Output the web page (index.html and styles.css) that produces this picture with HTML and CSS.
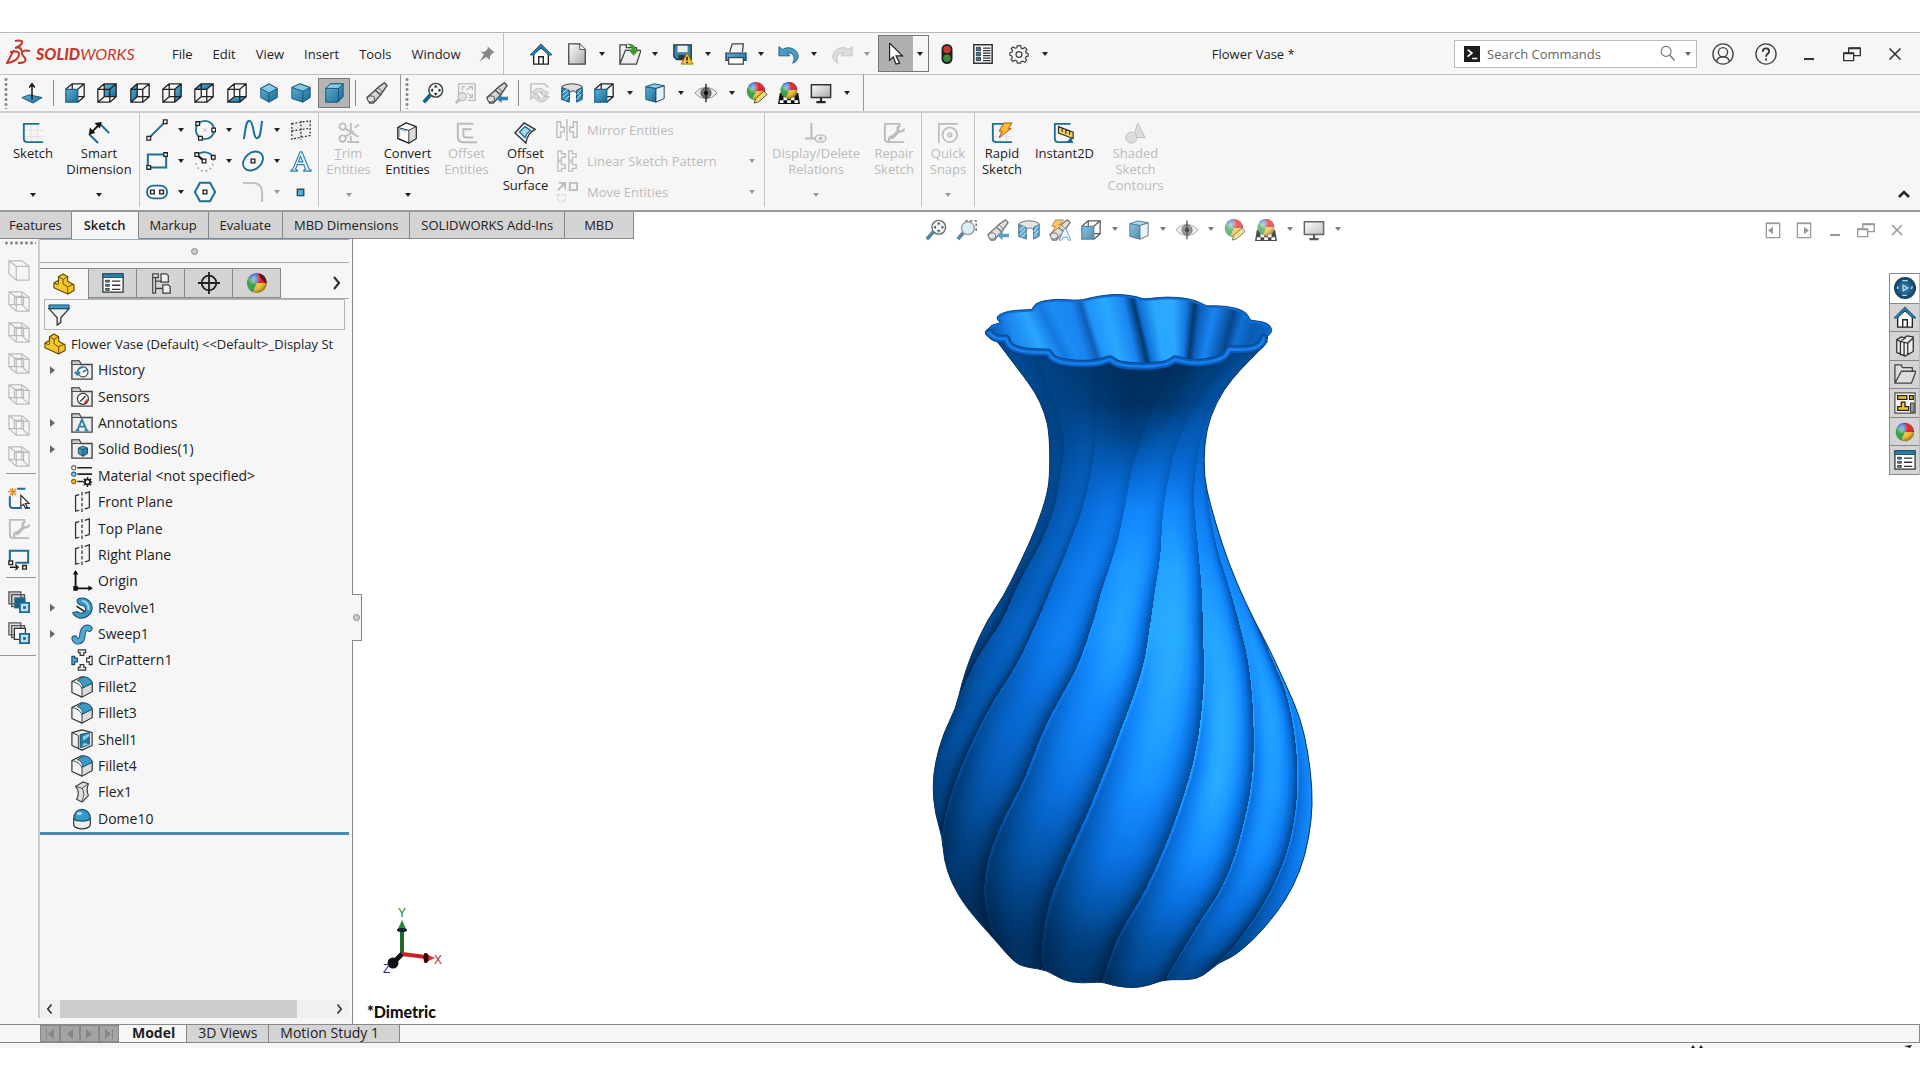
FILE: index.html
```html
<!DOCTYPE html>
<html lang="en">
<head>
    <meta charset="UTF-8">
    <meta name="viewport" content="width=device-width, initial-scale=1.0">
    <title>Flower Vase *</title>
    <link rel="stylesheet" href="styles.css">
</head>
<body>
    <!-- icon sprite -->
    <svg class="sprite" aria-hidden="true">
        <defs>
            <linearGradient id="blue" x1="0" y1="0" x2="1" y2="1"><stop offset="0" stop-color="#5db4d8"/><stop offset="1" stop-color="#1b6a93"/></linearGradient>
            <linearGradient id="grey" x1="0" y1="0" x2="1" y2="1"><stop offset="0" stop-color="#fff"/><stop offset="1" stop-color="#aaa"/></linearGradient>
            <radialGradient id="navy"><stop offset="0" stop-color="#3f86ad"/><stop offset="1" stop-color="#0e3f63"/></radialGradient>
            <radialGradient id="gloss" cx=".35" cy=".3" r=".7"><stop offset="0" stop-color="#fff" stop-opacity=".6"/><stop offset=".5" stop-color="#fff" stop-opacity="0"/><stop offset="1" stop-opacity=".35"/></radialGradient>
        </defs>
        <symbol id="wire" viewBox="0 0 24 24"><path fill="none" stroke="#222" stroke-width="1.4" d="M2 8h13v14H2zM9 2h13v14H9zM2 8l7-6M15 8l7-6M2 22l7-6M15 22l7-6"/></symbol>
        <symbol id="v-front" viewBox="0 0 24 24"><path fill="none" stroke="#222" stroke-width="1.4" d="M9 8V2h13v14h-7M2 8l7-6M15 8l7-6M15 22l7-6"/><path fill="url(#blue)" stroke="#1b5f85" stroke-width="1.4" d="M2 8h13v14H2z"/></symbol>
        <symbol id="v-back" viewBox="0 0 24 24"><path fill="url(#blue)" d="M9 2h13v14H9z"/><use href="#wire"/></symbol>
        <symbol id="v-left" viewBox="0 0 24 24"><path fill="url(#blue)" d="M2 8l7-6v14l-7 6z"/><use href="#wire"/></symbol>
        <symbol id="v-right" viewBox="0 0 24 24"><path fill="url(#blue)" d="M15 8l7-6v14l-7 6z"/><use href="#wire"/></symbol>
        <symbol id="v-top" viewBox="0 0 24 24"><path fill="url(#blue)" d="M2 8l7-6h13l-7 6z"/><use href="#wire"/></symbol>
        <symbol id="v-bottom" viewBox="0 0 24 24"><path fill="url(#blue)" d="M2 22l7-6h13l-7 6z"/><use href="#wire"/></symbol>
        <symbol id="v-iso" viewBox="0 0 24 24"><path fill="url(#blue)" stroke="#174f70" d="M12 2l9 5v10l-9 5-9-5V7z"/><path fill="#86cbe6" stroke="#174f70" d="M12 2l9 5-9 5-9-5z"/><path stroke="#174f70" d="M12 12v10"/></symbol>
        <symbol id="v-tri" viewBox="0 0 24 24"><path fill="url(#blue)" stroke="#174f70" d="M11 2l11 4v11l-8 5-12-4V6z"/><path fill="#86cbe6" stroke="#174f70" d="M11 2l11 4-8 4L2 6z"/><path stroke="#174f70" d="M14 10v12"/></symbol>
        <symbol id="v-dim" viewBox="0 0 24 24"><path fill="url(#blue)" stroke="#174f70" d="M8 2h14v14l-6 6H3V7z"/><path fill="#86cbe6" stroke="#174f70" d="M8 2h14l-5 5H3z"/><path stroke="#174f70" d="M17 7v15"/></symbol>
        <symbol id="normal" viewBox="0 0 24 24"><path fill="url(#blue)" stroke="#174f70" d="M1 17l8-3 14 3-10 6z"/><path fill="none" stroke="#111" stroke-width="1.6" d="M12 19V2M9 6l3-4 3 4"/></symbol>
        <symbol id="torch" viewBox="0 0 24 24"><path fill="url(#grey)" stroke="#444" stroke-width="1.4" d="M1 17l9-8 6 5-8 9H4zM10 9l3-3 7-5 3 3-5 7-2 3z"/><ellipse cx="5.500" cy="18.500" rx="4" ry="3.500" fill="#ddd" stroke="#444"/><path stroke="#444" d="M13 6l5 5"/></symbol>
        <symbol id="zoomfit" viewBox="0 0 24 24"><path stroke="#1b5f85" stroke-width="4" d="M2 22l8-9"/><circle cx="15" cy="9" r="7.500" fill="#f4f9fc" stroke="#444" stroke-width="1.6"/><path fill="#222" d="M15 3l2 3h-4zM15 15l2-3h-4zM9 9l3-2v4zM21 9l-3-2v4z"/></symbol>
        <symbol id="zoomarea" viewBox="0 0 24 24"><path fill="none" stroke="#333" stroke-width="1.500" stroke-dasharray="3 2" d="M10 2h12v12"/><path stroke="#1b5f85" stroke-width="4" d="M2 22l6-7"/><circle cx="13" cy="10" r="7" fill="#cfe8f3" stroke="#777" stroke-width="1.5"/></symbol>
        <symbol id="zoomoff" viewBox="0 0 24 24"><path fill="none" stroke="currentColor" stroke-width="1.5" d="M5 13V2h18v18h-8M9 9V5h3M16 5h4v4M20 13v4h-4M13 9l6-4M19 16l-4-4"/><circle cx="9" cy="16" r="4.500" fill="#e4e4e4" stroke="currentColor" stroke-width="1.500"/><path stroke="currentColor" stroke-width="3" d="M2 23l4-4"/></symbol>
        <symbol id="prev" viewBox="0 0 24 24"><use href="#torch"/><path fill="#2c7fa8" d="M11 18l6-5v3h7v4h-7v3z"/></symbol>
        <symbol id="rotateoff" viewBox="0 0 24 24"><path fill="none" stroke="currentColor" stroke-width="1.500" d="M2 20V2h15l4 4"/><path fill="#ddd" stroke="currentColor" d="M3 11c5-6 12-5 15 0h3l-3 6-6-5h3c-3-3-6-1-8 2zM22 16c-5 8-13 7-16 1H3l4-6 5 6H9c3 3 6 2 8-2z"/></symbol>
        <symbol id="section" viewBox="0 0 24 24"><path fill="#ddd" stroke="#333" d="M1 5c5-4 17-4 22 0v13l-6 3v-9c-2-3-6-3-8 0v9l-8-2z"/><path fill="#2f8db8" stroke="#174f70" d="M1 6l8 3v13l-8-3zM17 9l6-3v13l-6 3z"/><path stroke="#def" d="M2 12l5-4M2 17l6-6M4 20l5-5M17 14l5-6M17 19l5-6"/></symbol>
        <symbol id="style" viewBox="0 0 24 24"><path fill="url(#blue)" stroke="#174f70" d="M2 5l11 2v15L2 19z"/><path fill="#dff0f7" stroke="#333" d="M13 7l9-3v14l-9 4z"/><path fill="#8ccbe5" stroke="#174f70" d="M2 5l9-3 11 2-9 3z"/></symbol>
        <symbol id="eye" viewBox="0 0 24 24"><path fill="#e8e8e8" stroke="#888" d="M0 12c6-8 18-8 24 0-6 8-18 8-24 0z"/><circle cx="12" cy="12" r="5.500" fill="#777" stroke="#444"/><path stroke="#222" stroke-width="1.500" d="M12 2v20"/><circle cx="12" cy="12" r="2.500" fill="#111"/></symbol>
        <symbol id="ball" viewBox="0 0 24 24"><path fill="#2c5fc9" d="M12 12L3.500 6.500A10 10 0 0 1 12 2z"/><path fill="#d5262b" d="M12 12V2a10 10 0 0 1 10 10z"/><path fill="#35a047" d="M12 12L8 21.200A10 10 0 0 1 3.500 6.500z"/><path fill="#f2c02d" d="M12 12h10A10 10 0 0 1 8 21.200z"/><circle cx="12" cy="12" r="10" fill="url(#gloss)"/></symbol>
        <symbol id="ballpen" viewBox="0 0 24 24"><use href="#ball" x="-1" y="-2" width="24" height="24"/><path fill="#f2dc6a" stroke="#444" d="M9 23l1.500-5 9-8 3.500 3.500-9 8z"/></symbol>
        <symbol id="scene" viewBox="0 0 24 24"><path fill="#111" d="M2 12h20l2 12H0z"/><path fill="#fff" d="M2 20h4v3H2zM10 20h4v3h-4zM18 20h4v3h-4zM6 16h4v4H6zM14 16h4v4h-4z"/><use href="#ball" x="1" y="-2" width="22" height="22"/></symbol>
        <symbol id="monitor" viewBox="0 0 24 24"><path fill="url(#grey)" stroke="#333" stroke-width="1.600" d="M1.500 3h21v14h-21z"/><path stroke="#222" stroke-width="2.400" d="M12 17v5M7 22h10"/></symbol>
        <symbol id="annot" viewBox="0 0 24 24"><use href="#torch"/><path fill="#f8b934" stroke="#a45a10" d="M7 1h9l-5 5h4L3 15l4-7H3z"/><path fill="#e8f4fa" stroke="#2c7fa8" d="M11 23l6-13h1l6 13h-3l-1-3h-5l-1 3z"/></symbol>
        <symbol id="home" viewBox="0 0 24 24"><path fill="#fff" stroke="#222" stroke-width="1.500" d="M4 11v12h16V11l-8-6z"/><path fill="none" stroke="#222" stroke-width="1.500" d="M9.500 23v-8h5v8"/><path fill="#2c7fa8" stroke="#174f70" d="M0 13L12 1l12 12h-4l-8-8-8 8z"/></symbol>
        <symbol id="new" viewBox="0 0 24 24"><path fill="url(#grey)" stroke="#444" stroke-width="1.400" d="M3 1h12l6 6v16H3z"/><path fill="#fff" stroke="#444" d="M15 1v6h6"/></symbol>
        <symbol id="open" viewBox="0 0 24 24"><path fill="#eee" stroke="#444" stroke-width="1.400" d="M1 23V2h7v3h11v4M1 23L7 8h17l-5 15z"/><path fill="#3f9b2c" d="M8 1c7-1 10 2 10 6h4l-6 7-6-7h4c0-2-2-5-6-6z"/></symbol>
        <symbol id="save" viewBox="0 0 24 24"><path fill="#3a86ab" stroke="#234" stroke-width="1.400" d="M2 2h19v16H5l-3-3z"/><path fill="#eee" d="M6 3h11v7H6z"/><path fill="#333" d="M7 13h7v5H7z"/><path fill="#f9c22e" stroke="#9a6a00" d="M16.500 11L23 23H10z"/><path stroke="#222" stroke-width="1.800" d="M16.500 15v4M16.500 20.500v1.500"/></symbol>
        <symbol id="print" viewBox="0 0 24 24"><path fill="#f4f4f4" stroke="#444" stroke-width="1.400" d="M5 10L8 1h12l-1 9"/><path fill="url(#blue)" stroke="#174f70" stroke-width="1.400" d="M1 11h22v8H1z"/><path fill="#fff" stroke="#444" stroke-width="1.400" d="M4 16h16v7H4z"/></symbol>
        <symbol id="undo" viewBox="0 0 24 24"><path fill="#4a9cc2" stroke="#1b5f85" d="M1 4l4 3c8-5 18 1 17 9-1 3-3 5-6 6 3-5 2-12-6-11l3 3H1z"/></symbol>
        <symbol id="redo" viewBox="0 0 24 24"><path fill="#ddd" stroke="#c0c0c0" d="M23 4l-4 3C11 2 1 8 2 16c1 3 3 5 6 6-3-5-2-12 6-11l-3 3h12z"/></symbol>
        <symbol id="pointer" viewBox="0 0 24 24"><path fill="#fff" stroke="#222" stroke-width="1.300" d="M5 0v19l4-4 3 8 4-1-4-8h7z"/></symbol>
        <symbol id="lights" viewBox="0 0 24 24"><rect x="6" y="1" width="12" height="22" rx="6" fill="#222"/><circle cx="12" cy="7" r="4" fill="#d0382c"/><circle cx="12" cy="16.500" r="4" fill="#3f8b3c"/></symbol>
        <symbol id="options" viewBox="0 0 24 24"><path fill="#fff" stroke="#333" stroke-width="1.800" d="M1 1h22v22H1z"/><path fill="#2c7fa8" stroke="#333" d="M4 4h5v4H4zM4 10h5v4H4zM4 16h5v4H4z"/><path stroke="#333" stroke-width="1.500" d="M12 5h9M12 8h9M12 11h9M12 14h9M12 17h9M12 20h9"/></symbol>
        <symbol id="gear" viewBox="0 0 24 24"><path fill="none" stroke="#444" stroke-width="1.500" stroke-linejoin="round" d="M10 2h4l.6 3 2 .8L19 4l2.500 2.500-1.600 2.700.8 1.800 2.300.5v3l-2.500.7-.8 2 1.500 2.500-2.400 2.300-2.600-1.500-2 .8L14 23h-4l-.7-2.700-2-.8-2.500 1.500-2.300-2.300L4 16.200l-.8-2L1 13.500v-3l2.500-.6.8-2L2.600 5.500 5 3.500l2.500 1.600 2-.8z"/><circle cx="12" cy="12.500" r="3.500" fill="none" stroke="#444" stroke-width="1.500"/></symbol>
        <symbol id="pin" viewBox="0 0 24 24"><path fill="#888" d="M13 2l9 8-3 1-3 4v5l-5-4-9 6 6-9-4-4h5l4-4z"/></symbol>
        <symbol id="minus" viewBox="0 0 24 24"><path stroke="currentColor" stroke-width="2.500" d="M6 18h12"/></symbol>
        <symbol id="restore" viewBox="0 0 24 24"><path fill="none" stroke="currentColor" stroke-width="1.600" d="M2 11h12v9H2zM8 11V5h14v9h-8"/><path stroke="currentColor" stroke-width="2.500" d="M8 5h14M2 11h12"/></symbol>
        <symbol id="close" viewBox="0 0 24 24"><path stroke="currentColor" stroke-width="1.800" d="M6 6l12 12M18 6L6 18"/></symbol>
        <symbol id="user" viewBox="0 0 24 24"><g fill="none" stroke="#444" stroke-width="1.500"><circle cx="12" cy="12" r="11"/><circle cx="12" cy="10" r="5"/><path d="M5 20c1-4 4-5 7-5s6 1 7 5"/></g></symbol>
        <symbol id="help" viewBox="0 0 24 24"><circle cx="12" cy="12" r="11" fill="none" stroke="#444" stroke-width="1.500"/><path fill="none" stroke="#333" stroke-width="2" d="M8.500 9.500c0-5 7-4.500 7-.5 0 3-3.500 2.500-3.500 6M12 17v2"/></symbol>
        <symbol id="prompt" viewBox="0 0 18 18"><path fill="#1d1d1d" d="M0 0h18v18H0z"/><path fill="none" stroke="#fff" stroke-width="1.800" d="M4 4l5 4-5 4M9 14h6"/></symbol>
        <symbol id="search" viewBox="0 0 24 24"><circle cx="10" cy="9" r="7" fill="none" stroke="#777" stroke-width="1.600"/><path stroke="#777" stroke-width="2" d="M15 14l7 8"/></symbol>
        <symbol id="paneleft" viewBox="0 0 24 24"><path fill="none" stroke="currentColor" stroke-width="1.500" d="M4 4h16v17H4z"/><path fill="currentColor" d="M12 8v9l-6-4.500z"/><path stroke="currentColor" stroke-width="2" d="M4 4h16"/></symbol>
        <symbol id="paneright" viewBox="0 0 24 24"><path fill="none" stroke="currentColor" stroke-width="1.500" d="M4 4h16v17H4z"/><path fill="currentColor" d="M12 8v9l6-4.500z"/><path stroke="currentColor" stroke-width="2" d="M4 4h16"/></symbol>
        <symbol id="chev-up" viewBox="0 0 16 16"><path fill="none" stroke="#222" stroke-width="2.500" d="M3 11l5-5 5 5"/></symbol>
        <symbol id="chev-right" viewBox="0 0 16 16"><path fill="none" stroke="#333" stroke-width="2.200" d="M6 2l5 6-5 6"/></symbol>
        <symbol id="chev-left" viewBox="0 0 16 16"><path fill="none" stroke="#333" stroke-width="2.200" d="M10 2L5 8l5 6"/></symbol>

        <!-- sketch tools -->
        <symbol id="sketch" viewBox="0 0 24 24"><path stroke="#ddd" d="M3 9h20M3 16h20M10 3v18M17 3v18"/><path fill="none" stroke="#1f6f94" stroke-width="2" d="M19 2H2v16q0 4 4 4h17"/></symbol>
        <symbol id="sketchoff" viewBox="0 0 24 24"><path fill="none" stroke="currentColor" stroke-width="2" d="M19 2H2v16q0 4 4 4h17"/></symbol>
        <symbol id="dim" viewBox="0 0 24 24"><path fill="none" stroke="#1f6f94" stroke-width="2.200" d="M1 13l10 10M13 2l10 10"/><path stroke="#111" stroke-width="2" d="M4 11l8-8"/><path fill="#111" d="M1 14l1-8 6 6zM15 0L7 1l6 6z"/></symbol>
        <symbol id="line" viewBox="0 0 24 24"><path stroke="#1f6f94" stroke-width="2" d="M3 21L21 3"/><path fill="#fff" stroke="#222" stroke-width="1.400" d="M1 19h4v4H1zM19 1h4v4h-4z"/></symbol>
        <symbol id="circle" viewBox="0 0 24 24"><circle cx="12" cy="12" r="10" fill="none" stroke="#1f6f94" stroke-width="2"/><path stroke="#bbb" d="M10 10l4 4M14 10l-4 4"/><path fill="#fff" stroke="#222" stroke-width="1.400" d="M2 3h4v4H2zM19.500 10h4v4h-4zM5 19h4v4H5z"/></symbol>
        <symbol id="spline" viewBox="0 0 24 24"><path fill="none" stroke="#1f6f94" stroke-width="2.200" d="M2 22C4 12 4 2 8 2c5 0 4 19 8 19 5 0 4-9 6-19"/></symbol>
        <symbol id="splane" viewBox="0 0 24 24"><path fill="#eee" stroke="#222" stroke-width="1.300" stroke-dasharray="2 2" d="M2 5l20-3v16L2 22zM12 2v21M2 13l20-3"/></symbol>
        <symbol id="rect" viewBox="0 0 24 24"><path fill="none" stroke="#1f6f94" stroke-width="2.200" d="M2 5h20v14H2z"/><path fill="#fff" stroke="#222" stroke-width="1.400" d="M1 17h4v4H1zM19.500 3h4v4h-4z"/></symbol>
        <symbol id="arc" viewBox="0 0 24 24"><path fill="none" stroke="#1f6f94" stroke-width="2" d="M3 6c6-6 15-4 18 2"/><path fill="none" stroke="#999" stroke-dasharray="2 3" stroke-width="1.500" d="M21 10c1 8-4 13-10 13S2 17 2 12"/><path stroke="#111" stroke-width="2.500" d="M4 6l7 6"/><path fill="#fff" stroke="#222" stroke-width="1.400" d="M1 3h4v4H1zM19 6h4v4h-4zM9 10h4v4H9z"/></symbol>
        <symbol id="ellipse" viewBox="0 0 24 24"><ellipse cx="12" cy="12" rx="12" ry="9" fill="none" stroke="#1f6f94" stroke-width="2" transform="rotate(-40 12 12)"/><path fill="none" stroke="#222" stroke-width="1.500" d="M10 10h4v4h-4z"/></symbol>
        <symbol id="text" viewBox="0 0 24 24"><path fill="#eaf4f9" stroke="#2c7fa8" stroke-width="1.200" d="M1 22l2-1L11 2h2l8 19 2 1v1h-8v-1l2-1-2-5H8l-2 5 2 1v1H1zM9 13h5l-2.500-6z"/></symbol>
        <symbol id="slot" viewBox="0 0 24 24"><rect x="1" y="5" width="22" height="14" rx="7" fill="none" stroke="#1f6f94" stroke-width="2"/><path fill="#fff" stroke="#222" stroke-width="1.500" d="M5 10h4v4H5zM15 10h4v4h-4z"/></symbol>
        <symbol id="poly" viewBox="0 0 24 24"><path fill="none" stroke="#1f6f94" stroke-width="2.200" d="M6.500 2h11L23 12l-5.500 10h-11L1 12z"/><path fill="#fff" stroke="#222" stroke-width="1.500" d="M10 10h4v4h-4z"/></symbol>
        <symbol id="sfillet" viewBox="0 0 24 24"><path fill="none" stroke="#bbb" stroke-width="2" d="M1 2h10q11 0 11 11v10"/></symbol>
        <symbol id="point" viewBox="0 0 24 24"><path fill="#4fb0dc" stroke="#17506f" stroke-width="1.500" d="M8 9h7v7H8z"/></symbol>
        <symbol id="trim" viewBox="0 0 24 24"><g fill="none" stroke="currentColor" stroke-width="2"><circle cx="5" cy="5" r="3.500"/><circle cx="5" cy="18" r="3.500"/><path d="M8 7l14 9M8 16l9-6M14 1v10M18 6l5-3M14 15v8M10 22h13"/></g></symbol>
        <symbol id="convert" viewBox="0 0 24 24"><path fill="#fff" stroke="#222" stroke-width="1.500" stroke-linejoin="round" d="M11 1l11 4v13l-8 5-12-5V6z"/><path fill="#ddd" stroke="#222" d="M14 9v14l8-5V5z"/><path fill="none" stroke="#222" d="M2 6l12 3"/><path fill="none" stroke="#49a5cc" d="M4 16V8l8 2"/></symbol>
        <symbol id="offset" viewBox="0 0 24 24"><path fill="none" stroke="currentColor" stroke-width="2.200" d="M19 2H2v14q0 6 6 6h15M17 8H8v6q0 3 3 3h8"/></symbol>
        <symbol id="surface" viewBox="0 0 24 24"><path fill="#e8f2f7" stroke="#333" stroke-width="1.500" d="M1 12L11 1l12 7c-6 3-9 7-10 15z"/><path fill="#a9d5e8" stroke="#1f6f94" stroke-width="1.500" d="M6 11l6-6 6 4c-3 2-5 5-6 8z"/></symbol>
        <symbol id="mirror" viewBox="0 0 24 24"><path fill="none" stroke="currentColor" stroke-width="1.500" d="M12 0v24M1 3h4v6h4v5H5v6H1zM23 3h-4v6h-4v5h4v6h4z"/></symbol>
        <symbol id="pattern" viewBox="0 0 24 24"><path fill="none" stroke="currentColor" stroke-width="1.400" d="M2 1h4v3h4v4H6v3H2zM14 1h4v3h4v4h-4v3h-4zM2 13h4v3h4v4H6v3H2zM14 13h4v3h4v4h-4v3h-4z"/></symbol>
        <symbol id="move" viewBox="0 0 24 24"><path fill="none" stroke="currentColor" stroke-width="2" d="M15 2h8v8h-8zM2 10l7-7M3 2h7v7"/><path fill="none" stroke="currentColor" stroke-dasharray="2 2" d="M2 15h8v7H2z"/></symbol>
        <symbol id="relations" viewBox="0 0 24 24"><path stroke="currentColor" stroke-width="2.200" d="M7 1v17M0 18h14"/><ellipse cx="17" cy="18" rx="6" ry="4" fill="#eee" stroke="currentColor" stroke-width="1.500"/><circle cx="17" cy="18" r="2" fill="currentColor"/></symbol>
        <symbol id="repair" viewBox="0 0 24 24"><use href="#sketchoff"/><path fill="none" stroke="currentColor" stroke-width="3.500" d="M9 18l9-9"/><path fill="none" stroke="currentColor" stroke-width="2.500" d="M19 4c-4 1-4 5-1 6 3 1 5-1 5-3M11 16c-4-1-5 2-4 5"/></symbol>
        <symbol id="snaps" viewBox="0 0 24 24"><g fill="none" stroke="currentColor" stroke-width="1.800"><path d="M2 23V2h21"/><circle cx="14" cy="14" r="8"/><circle cx="14" cy="14" r="2"/></g></symbol>
        <symbol id="rapid" viewBox="0 0 24 24"><use href="#sketch"/><path fill="#f9bb3a" stroke="#a4500c" d="M14 1h9l-4 6h3L9 17l3-7H9z"/></symbol>
        <symbol id="instant" viewBox="0 0 24 24"><path fill="none" stroke="#1f6f94" stroke-width="2" d="M19 2H2v16q0 4 4 4h15"/><path fill="#f4d35a" stroke="#333" stroke-width="1.300" d="M6 5l16 6v7L6 12zM10 7v4M14 8v5M18 10v4"/><path fill="#1f6f94" d="M22 23h-8l6-7z"/></symbol>
        <symbol id="contours" viewBox="0 0 24 24"><path fill="#ddd" stroke="currentColor" d="M15 1l8 16H10z"/><circle cx="8" cy="17" r="6" fill="#ddd" stroke="currentColor"/></symbol>
        <symbol id="ghost" viewBox="0 0 24 24"><path fill="none" stroke="currentColor" stroke-width="1.300" d="M1 2h14l8 6v15H9l-8-7zM1 2l8 6h14M9 8v15"/></symbol>
        <symbol id="ghostbox" viewBox="0 0 24 24"><path fill="none" stroke="currentColor" stroke-width="1.300" d="M1 2h14l8 6v15H9l-8-7zM1 2l8 6h14M9 8v15M15 2v14M1 16h14l8 7M7 7h10v9H7z"/></symbol>
        <symbol id="newsketch" viewBox="0 0 24 24"><path fill="none" stroke="#1f6f94" stroke-width="2.200" d="M10 2h9M2 10v9q0 4 4 4h9M19 23h5"/><path stroke="#e0902a" stroke-width="1.500" d="M5 1v9M0 5h9M2 2l7 7M9 2L2 9"/><path fill="#fff" stroke="#333" stroke-width="1.300" d="M14 9v12l3-2 2 4 2-1-2-4h4z"/></symbol>
        <symbol id="modify" viewBox="0 0 24 24"><path fill="none" stroke="#1f6f94" stroke-width="2.200" d="M2 13V2h20v13H8"/><path fill="#fff" stroke="#222" stroke-width="1.500" d="M1 13h4v4H1zM16 18h4v4h-4z"/><path fill="none" stroke="#222" stroke-width="1.600" d="M2 20h9M8 17l3 3-3 3"/></symbol>
        <symbol id="stack1" viewBox="0 0 24 24"><path fill="#ccc" stroke="#555" stroke-width="1.400" d="M1 1h13v13H1zM4 4h14v13H4z"/><path fill="#1b5f85" d="M7 7h12v12H7z"/><path fill="#bfe2f0" stroke="#1b6a93" stroke-width="2" d="M13 13h10v10H13z"/><path fill="#1b6a93" d="M16.500 16.500h3v3h-3z"/></symbol>
        <symbol id="stack2" viewBox="0 0 24 24"><path fill="#ddd" stroke="#555" stroke-width="1.400" d="M1 1h13v13H1zM4 4h14v13H4z"/><path fill="#fff" stroke="#333" stroke-width="1.400" d="M7 7h12v12H7z"/><path fill="#bfe2f0" stroke="#1b6a93" stroke-width="2" d="M13 13h10v10H13z"/><path fill="#1b6a93" d="M16.500 16.500h3v3h-3z"/></symbol>

        <!-- feature tree -->
        <symbol id="part" viewBox="0 0 24 24"><path fill="#f5c72c" stroke="#5c4708" stroke-width="1.200" stroke-linejoin="round" d="M1 11l5-3V4l5-3 5 3v5l7 4v6l-7 4L1 16z"/><path fill="none" stroke="#5c4708" d="M6 4l5 3v5l5 3v8M11 7l5-3M6 8v4M16 15l7-3M1 11l5 2"/></symbol>
        <symbol id="props" viewBox="0 0 24 24"><path fill="#fff" stroke="#333" stroke-width="1.400" d="M1 2h22v20H1z"/><path fill="#2c7fa8" stroke="#174f70" d="M1 2h22v4H1z"/><path fill="#4fa9cf" stroke="#333" d="M4 9h4v2H4zM4 13.500h4v2H4zM4 18h4v2H4z"/><path stroke="#333" stroke-width="1.500" d="M11 10h9M11 14.500h9M11 19h9"/></symbol>
        <symbol id="config" viewBox="0 0 24 24"><path fill="#eee" stroke="#444" stroke-width="1.400" d="M3 2h6v4H3zM3 6v17h3V6M6 18h8M6 10h7M14 14h6l2 2v7h-8zM12 2h6l2 2v7h-8z"/></symbol>
        <symbol id="target" viewBox="0 0 24 24"><g fill="none" stroke="#222" stroke-width="2"><circle cx="12" cy="12" r="8"/><path d="M12 0v24M0 12h24"/></g></symbol>
        <symbol id="ball-tab" viewBox="0 0 24 24"><use href="#ball" x="-1" y="-1" width="26" height="26"/><path fill="#5a1820" d="M14 2c6 0 9 6 8 11-3-3-7-6-8-11z"/></symbol>
        <symbol id="funnel" viewBox="0 0 24 24"><path fill="#eee" stroke="#333" stroke-width="1.400" d="M1 5l9 10v8l4-3v-5l9-10z"/><path fill="#3a9ac4" stroke="#174f70" d="M1 1h22v4H1z"/></symbol>
        <symbol id="folder" viewBox="0 0 24 24"><path fill="#eee" stroke="#444" stroke-width="1.500" d="M1 22V2h8l2 4h12v16z"/><path fill="#ccc" stroke="#444" d="M1 2h8l2 4H1z"/></symbol>
        <symbol id="history" viewBox="0 0 24 24"><use href="#folder"/><circle cx="13" cy="14" r="5.500" fill="#fff" stroke="#555" stroke-width="1.300"/><path fill="none" stroke="#2c7fa8" stroke-width="2" d="M4 14l3 3 3-3M7 15c0-4 3-6 6-6M13 14l4-2"/></symbol>
        <symbol id="sensor" viewBox="0 0 24 24"><use href="#folder"/><circle cx="13" cy="14" r="6" fill="#fff" stroke="#333" stroke-width="1.300"/><path fill="none" stroke="#d03030" stroke-width="2" d="M14.500 18.500a5 5 0 0 0 3-4"/><path stroke="#333" stroke-width="1.500" d="M10 17l6-6"/></symbol>
        <symbol id="annotations" viewBox="0 0 24 24"><use href="#folder"/><path fill="none" stroke="#2c7fa8" stroke-width="2" d="M7 20l5-12 5 12M9 16h6M5 20h4M15 20h4"/></symbol>
        <symbol id="bodies" viewBox="0 0 24 24"><use href="#folder"/><path fill="url(#blue)" stroke="#174f70" d="M13 9l5 2v6l-5 3-5-3v-6z"/><path fill="none" stroke="#174f70" d="M8 11l5 2 5-2M13 13v7"/></symbol>
        <symbol id="material" viewBox="0 0 24 24"><path stroke="#222" stroke-width="1.800" d="M7 3h16M7 10h16M7 18h6"/><g fill="#fff" stroke-width="1.300"><circle cx="3" cy="3" r="2.300" stroke="#666"/><circle cx="3" cy="10" r="2.300" fill="#8fd0ee" stroke="#1b6a93"/><circle cx="3" cy="18" r="2.300" fill="#f5c72c" stroke="#8a6a00"/></g><circle cx="18" cy="18.500" r="2.800" fill="none" stroke="#222" stroke-width="2"/><path stroke="#222" stroke-width="1.600" d="M18 13v3M18 21v3M13 18.500h2M21 18.500h2M14 15l2 2M20 20l2 2M22 15l-2 2M16 20l-2 2"/></symbol>
        <symbol id="plane" viewBox="0 0 24 24"><path fill="none" stroke="#333" stroke-width="1.400" d="M9 4L5 5v17l4-1M15 2.500l5-1.500v17l-5 1.500"/><path stroke="#333" stroke-width="1.400" stroke-dasharray="4 2" d="M12 1v22"/></symbol>
        <symbol id="origin" viewBox="0 0 24 24"><path fill="none" stroke="#111" stroke-width="2" d="M5 3v17h16"/><path fill="#111" d="M5 0l3 5H2zM24 20l-5-3v6zM2.500 17.500h5v5h-5z"/></symbol>
        <symbol id="revolve" viewBox="0 0 24 24"><path fill="#3a9ac4" stroke="#174f70" stroke-width="1.200" d="M8 2c8-3 15 3 15 10S16 24 9 23c-4-1-7-4-7-6l5-1c3 3 8 2 9-2 0-4-3-5-5-5-3 0-6-5-3-7z"/><path fill="none" stroke="#a9dbef" stroke-width="2" d="M12 4c5 1 8 5 7 10"/><path stroke="#111" stroke-width="1.500" d="M6 10l9 6"/></symbol>
        <symbol id="sweep" viewBox="0 0 24 24"><path fill="none" stroke="#174f70" stroke-width="7" stroke-linecap="round" d="M4 17c2 5 7 3 8-1l1-6c1-4 4-6 7-4"/><path fill="none" stroke="#4fa9cf" stroke-width="5" stroke-linecap="round" d="M4 17c2 5 7 3 8-1l1-6c1-4 4-6 7-4"/></symbol>
        <symbol id="cirpat" viewBox="0 0 24 24"><path fill="#4fa9cf" stroke="#174f70" stroke-width="1.300" d="M1 8h3v2h3v4H4v3H1z"/><path fill="#f6f6f6" stroke="#333" stroke-width="1.300" d="M23 8h-3v2h-3v4h3v3h3zM8 1h8v3h-2v3h-4V4H8zM8 23h8v-3h-2v-3h-4v3H8z"/></symbol>
        <symbol id="fillet" viewBox="0 0 24 24"><path fill="#f4f4f4" stroke="#333" stroke-width="1.300" stroke-linejoin="round" d="M1 6l10-5c5 0 9 1 12 6v10l-11 6-11-5z"/><path fill="#dcdcdc" stroke="#333" d="M12 13v10l11-6V8z"/><path fill="none" stroke="#333" d="M1 6c5 1 9 3 11 8"/><path fill="#3a9ac4" stroke="#174f70" d="M7 5l6-4c5 0 9 2 10 7l-10 5c0-4-3-7-6-8z"/></symbol>
        <symbol id="shell" viewBox="0 0 24 24"><path fill="#eee" stroke="#333" stroke-width="1.300" stroke-linejoin="round" d="M1 4l11-3 11 3v14l-11 5-11-5z"/><path fill="none" stroke="#333" d="M1 4l7 3v14"/><path fill="#1f7ba5" stroke="#174f70" d="M10 6l10-2v13l-8 3h-2z"/><path fill="#8ccbe5" d="M13 8l7-3v3l-7 5zM12 19l2-4 6 2z"/></symbol>
        <symbol id="flex" viewBox="0 0 24 24"><path fill="#ddd" stroke="#444" stroke-width="1.300" stroke-linejoin="round" d="M5 6l8-5 6 2c-2 5-2 8 0 13l-7 7-6-3c3-5 3-9-1-14z"/><path fill="none" stroke="#444" d="M5 6l7 2 7-5M12 8c3 5 2 9 0 14"/></symbol>
        <symbol id="dome" viewBox="0 0 24 24"><path fill="#eee" stroke="#333" stroke-width="1.300" d="M3 11v8c3 5 15 5 18 0v-8z"/><path fill="#3a9ac4" stroke="#174f70" stroke-width="1.300" d="M3 12c0-14 18-14 18 0-4 3-14 3-18 0z"/><ellipse cx="9" cy="6" rx="3" ry="2" fill="#a9dbef"/></symbol>

        <!-- task pane -->
        <symbol id="globe" viewBox="0 0 24 24"><circle cx="12" cy="12" r="12" fill="url(#navy)"/><path fill="none" stroke="#a9dbef" stroke-width="1.500" d="M10 9l5 3-5 3zM4 10v3M20 10l-1 3M9 20h5M9 4h6"/></symbol>
        <symbol id="books" viewBox="0 0 24 24"><path fill="#eee" stroke="#333" stroke-width="1.400" stroke-linejoin="round" d="M3 5l5-3 3 1 3-2 7 1v16l-9 5-9-4zM3 5l4 2v15M8 6l5-3M7 7l4 1v14M11 8l4 1 6-6M15 9v12"/></symbol>
        <symbol id="dir" viewBox="0 0 24 24"><path fill="#ddd" stroke="#444" stroke-width="1.400" stroke-linejoin="round" d="M1 22V2h7l1 3h11v4M1 22L8 9h16l-5 13z"/></symbol>
        <symbol id="palette" viewBox="0 0 24 24"><path fill="#f4f4f4" stroke="#555" stroke-width="1.400" d="M1 1h22v22H1z"/><path fill="#f5c72c" stroke="#222" stroke-width="1.400" d="M4 4h10v4H4zM17 4h4v4h-4zM8 11h4v5h4v4H4v-4h4z"/><path fill="#999" stroke="#333" d="M18 12h4v10h-4z"/></symbol>
    </svg>

    <div class="app">
        <header class="titlebar">
            <div class="logo">
                <svg class="logo-mark" viewBox="0 0 24 26" aria-hidden="true"><g fill="none" stroke="#c8372d" stroke-width="2"><path d="M9 2c6-1 8 0 7 2s-4 4-7 5c4-1 7 0 6 3"/><path d="M8 11L1 24c8-1 12-5 12-9 0-3-4-3-9-2"/><path d="M24 12c-6-1-9 0-8 3 1 3 5 4 3 7-1 2-5 2-7 2"/></g></svg>
                <span class="logo-bold">SOLID</span><span class="logo-thin">WORKS</span>
            </div>
            <nav class="menu">
                <button>File</button>
                <button>Edit</button>
                <button>View</button>
                <button>Insert</button>
                <button>Tools</button>
                <button>Window</button>
            </nav>
            <button class="pin" aria-label="Pin menu"><svg><use href="#pin"/></svg></button>
            <div class="quick">
                <button class="tool home" aria-label="Home"><svg><use href="#home"/></svg></button>
                <div class="split"><button class="tool" aria-label="New"><svg><use href="#new"/></svg></button><button class="drop" aria-label="New options"></button></div>
                <div class="split"><button class="tool" aria-label="Open"><svg><use href="#open"/></svg></button><button class="drop" aria-label="Open options"></button></div>
                <div class="split"><button class="tool" aria-label="Save"><svg><use href="#save"/></svg></button><button class="drop" aria-label="Save options"></button></div>
                <div class="split"><button class="tool" aria-label="Print"><svg><use href="#print"/></svg></button><button class="drop" aria-label="Print options"></button></div>
                <div class="split"><button class="tool" aria-label="Undo"><svg><use href="#undo"/></svg></button><button class="drop" aria-label="Undo options"></button></div>
                <div class="split off"><button class="tool" aria-label="Redo" disabled><svg><use href="#redo"/></svg></button><button class="drop" aria-label="Redo options" disabled></button></div>
                <div class="select-tool"><button class="tool" aria-label="Select"><svg><use href="#pointer"/></svg></button><button class="drop" aria-label="Select options"></button></div>
                <button class="tool wide" aria-label="Rebuild"><svg><use href="#lights"/></svg></button>
                <button class="tool wide small" aria-label="File properties"><svg><use href="#options"/></svg></button>
                <button class="tool wide small" aria-label="Options"><svg><use href="#gear"/></svg></button>
                <button class="drop gear-drop" aria-label="Options menu"></button>
            </div>
            <h1 class="doc-title">Flower Vase *</h1>
            <div class="search">
                <svg class="search-prompt" aria-hidden="true"><use href="#prompt"/></svg>
                <input type="text" placeholder="Search Commands" aria-label="Search Commands">
                <svg class="search-lens" aria-hidden="true"><use href="#search"/></svg>
                <button class="drop" aria-label="Search scope"></button>
            </div>
            <div class="window-buttons">
                <button aria-label="Account"><svg><use href="#user"/></svg></button>
                <button aria-label="Help"><svg><use href="#help"/></svg></button>
                <button class="slim" aria-label="Minimize"><svg><use href="#minus"/></svg></button>
                <button class="slim" aria-label="Restore"><svg><use href="#restore"/></svg></button>
                <button aria-label="Close"><svg><use href="#close"/></svg></button>
            </div>
        </header>

        <div class="toolbar">
            <div class="bar">
                <span class="grip"></span>
                <button class="tool lone" aria-label="Normal to"><svg><use href="#normal"/></svg></button>
                <span class="sep"></span>
                <div class="views">
                    <button class="tool" aria-label="Front"><svg><use href="#v-front"/></svg></button>
                    <button class="tool" aria-label="Back"><svg><use href="#v-back"/></svg></button>
                    <button class="tool" aria-label="Left"><svg><use href="#v-left"/></svg></button>
                    <button class="tool" aria-label="Right"><svg><use href="#v-right"/></svg></button>
                    <button class="tool" aria-label="Top"><svg><use href="#v-top"/></svg></button>
                    <button class="tool" aria-label="Bottom"><svg><use href="#v-bottom"/></svg></button>
                    <button class="tool" aria-label="Isometric"><svg><use href="#v-iso"/></svg></button>
                    <button class="tool" aria-label="Trimetric"><svg><use href="#v-tri"/></svg></button>
                    <button class="tool pressed" aria-label="Dimetric"><svg><use href="#v-dim"/></svg></button>
                </div>
                <span class="sep"></span>
                <button class="tool" aria-label="View selector"><svg><use href="#torch"/></svg></button>
            </div>
            <div class="bar">
                <span class="grip"></span>
                <button class="tool lone" aria-label="Zoom to fit"><svg><use href="#zoomfit"/></svg></button>
                <button class="tool off" aria-label="Zoom to selection" disabled><svg><use href="#zoomoff"/></svg></button>
                <button class="tool" aria-label="Previous view"><svg><use href="#prev"/></svg></button>
                <span class="sep"></span>
                <button class="tool off" aria-label="Rotate" disabled><svg><use href="#rotateoff"/></svg></button>
                <button class="tool" aria-label="Section view"><svg><use href="#section"/></svg></button>
                <button class="tool" aria-label="View orientation"><svg><use href="#v-front"/></svg></button><button class="drop" aria-label="Orientation menu"></button>
                <button class="tool" aria-label="Display style"><svg><use href="#style"/></svg></button><button class="drop" aria-label="Style menu"></button>
                <button class="tool" aria-label="Hide/show"><svg><use href="#eye"/></svg></button><button class="drop" aria-label="Hide/show menu"></button>
                <button class="tool" aria-label="Edit appearance"><svg><use href="#ballpen"/></svg></button>
                <button class="tool" aria-label="Apply scene"><svg><use href="#scene"/></svg></button>
                <button class="tool" aria-label="View settings"><svg><use href="#monitor"/></svg></button><button class="drop" aria-label="Settings menu"></button>
            </div>
        </div>

        <section class="ribbon">
            <div class="group pad">
                <div class="command w-66"><button><svg><use href="#sketch"/></svg>Sketch</button><button class="drop" aria-label="Sketch menu"></button></div>
                <div class="command w-66"><button><svg><use href="#dim"/></svg>Smart<br>Dimension</button><button class="drop" aria-label="Dimension menu"></button></div>
            </div>
            <div class="group entities">
                <button aria-label="Line"><svg><use href="#line"/></svg></button><button class="drop" aria-label="Line menu"></button>
                <button aria-label="Circle"><svg><use href="#circle"/></svg></button><button class="drop" aria-label="Circle menu"></button>
                <button aria-label="Spline"><svg><use href="#spline"/></svg></button><button class="drop" aria-label="Spline menu"></button>
                <button aria-label="Plane"><svg><use href="#splane"/></svg></button>
                <button aria-label="Rectangle"><svg><use href="#rect"/></svg></button><button class="drop" aria-label="Rectangle menu"></button>
                <button aria-label="Arc"><svg><use href="#arc"/></svg></button><button class="drop" aria-label="Arc menu"></button>
                <button aria-label="Ellipse"><svg><use href="#ellipse"/></svg></button><button class="drop" aria-label="Ellipse menu"></button>
                <button aria-label="Text"><svg><use href="#text"/></svg></button>
                <button aria-label="Slot"><svg><use href="#slot"/></svg></button><button class="drop" aria-label="Slot menu"></button>
                <button aria-label="Polygon"><svg><use href="#poly"/></svg></button><span></span>
                <button aria-label="Sketch fillet" disabled><svg><use href="#sfillet"/></svg></button><button class="drop" aria-label="Fillet menu" disabled></button>
                <button aria-label="Point"><svg><use href="#point"/></svg></button>
            </div>
            <div class="group">
                <div class="command w-59 off"><button disabled><svg><use href="#trim"/></svg><span><u>T</u>rim</span>Entities</button><button class="drop" aria-label="Trim menu" disabled></button></div>
                <div class="command w-59"><button><svg><use href="#convert"/></svg>Convert<br>Entities</button><button class="drop" aria-label="Convert menu"></button></div>
                <div class="command w-59 off"><button disabled><svg><use href="#offset"/></svg>Offset<br>Entities</button></div>
                <div class="command w-59"><button><svg><use href="#surface"/></svg>Offset<br>On<br>Surface</button></div>
                <div class="command-list off">
                    <div><button disabled><svg><use href="#mirror"/></svg>Mirror Entities</button></div>
                    <div><button disabled><svg><use href="#pattern"/></svg>Linear Sketch Pattern</button><button class="drop" aria-label="Pattern menu" disabled></button></div>
                    <div><button disabled><svg><use href="#move"/></svg>Move Entities</button><button class="drop" aria-label="Move menu" disabled></button></div>
                </div>
            </div>
            <div class="group">
                <div class="command w-102 off"><button disabled><svg><use href="#relations"/></svg>Display/Delete<br>Relations</button><button class="drop" aria-label="Relations menu" disabled></button></div>
                <div class="command w-54 off"><button disabled><svg><use href="#repair"/></svg>Repair<br>Sketch</button></div>
            </div>
            <div class="group">
                <div class="command w-52 off"><button disabled><svg><use href="#snaps"/></svg>Quick<br>Snaps</button><button class="drop" aria-label="Snaps menu" disabled></button></div>
            </div>
            <div class="group last">
                <div class="command w-54"><button><svg><use href="#rapid"/></svg>Rapid<br>Sketch</button></div>
                <div class="command w-71"><button><svg><use href="#instant"/></svg>Instant2D</button></div>
                <div class="command w-71 off"><button disabled><svg><use href="#contours"/></svg>Shaded<br>Sketch<br>Contours</button></div>
            </div>
            <button class="collapse" aria-label="Collapse ribbon"><svg><use href="#chev-up"/></svg></button>
        </section>

        <nav class="tabs">
            <button class="tab-first">Features</button>
            <button class="active">Sketch</button>
            <button>Markup</button>
            <button>Evaluate</button>
            <button>MBD Dimensions</button>
            <button>SOLIDWORKS Add-Ins</button>
            <button class="tab-wide">MBD</button>
        </nav>

        <main class="workspace">
            <aside class="side">
                <span class="grip-h"></span>
                <div class="side-group off">
                    <button aria-label="Front plane view" disabled><svg><use href="#ghost"/></svg></button>
                    <button aria-label="Back plane view" disabled><svg><use href="#ghostbox"/></svg></button>
                    <button aria-label="Left plane view" disabled><svg><use href="#ghostbox"/></svg></button>
                    <button aria-label="Right plane view" disabled><svg><use href="#ghostbox"/></svg></button>
                    <button aria-label="Top plane view" disabled><svg><use href="#ghostbox"/></svg></button>
                    <button aria-label="Bottom plane view" disabled><svg><use href="#ghostbox"/></svg></button>
                    <button aria-label="Section plane view" disabled><svg><use href="#ghostbox"/></svg></button>
                </div>
                <div class="side-group">
                    <button aria-label="New sketch"><svg><use href="#newsketch"/></svg></button>
                    <button class="off" aria-label="Repair" disabled><svg><use href="#repair"/></svg></button>
                    <button aria-label="Modify"><svg><use href="#modify"/></svg></button>
                </div>
                <div class="side-group end">
                    <button aria-label="Make block"><svg><use href="#stack1"/></svg></button>
                    <button aria-label="Insert block"><svg><use href="#stack2"/></svg></button>
                </div>
            </aside>

            <aside class="panel">
                <div class="panel-grip"><span class="dot"></span></div>
                <div class="panel-tabs">
                    <button class="active" aria-label="Feature tree"><svg><use href="#part"/></svg></button>
                    <button aria-label="Properties"><svg><use href="#props"/></svg></button>
                    <button aria-label="Configurations"><svg><use href="#config"/></svg></button>
                    <button aria-label="Dimensions"><svg><use href="#target"/></svg></button>
                    <button aria-label="Display"><svg><use href="#ball-tab"/></svg></button>
                    <button class="more" aria-label="More tabs"><svg><use href="#chev-right"/></svg></button>
                </div>
                <label class="filter"><svg aria-hidden="true"><use href="#funnel"/></svg><input type="text" aria-label="Filter tree"></label>
                <div class="tree-root"><svg aria-hidden="true"><use href="#part"/></svg>Flower Vase (Default) &lt;&lt;Default&gt;_Display St</div>
                <ul class="tree">
                    <li class="has-children"><svg><use href="#history"/></svg>History</li>
                    <li><svg><use href="#sensor"/></svg>Sensors</li>
                    <li class="has-children"><svg><use href="#annotations"/></svg>Annotations</li>
                    <li class="has-children"><svg><use href="#bodies"/></svg>Solid Bodies(1)</li>
                    <li><svg><use href="#material"/></svg>Material &lt;not specified&gt;</li>
                    <li><svg><use href="#plane"/></svg>Front Plane</li>
                    <li><svg><use href="#plane"/></svg>Top Plane</li>
                    <li><svg><use href="#plane"/></svg>Right Plane</li>
                    <li><svg><use href="#origin"/></svg>Origin</li>
                    <li class="has-children"><svg><use href="#revolve"/></svg>Revolve1</li>
                    <li class="has-children"><svg><use href="#sweep"/></svg>Sweep1</li>
                    <li><svg><use href="#cirpat"/></svg>CirPattern1</li>
                    <li><svg><use href="#fillet"/></svg>Fillet2</li>
                    <li><svg><use href="#fillet"/></svg>Fillet3</li>
                    <li><svg><use href="#shell"/></svg>Shell1</li>
                    <li><svg><use href="#fillet"/></svg>Fillet4</li>
                    <li><svg><use href="#flex"/></svg>Flex1</li>
                    <li><svg><use href="#dome"/></svg>Dome10</li>
                </ul>
                <div class="scrollbar">
                    <button aria-label="Scroll left"><svg><use href="#chev-left"/></svg></button>
                    <span class="track"><span class="thumb"></span></span>
                    <button aria-label="Scroll right"><svg><use href="#chev-right"/></svg></button>
                </div>
            </aside>

            <section class="viewport">
                <button class="splitter" aria-label="Collapse panel"><span class="dot"></span></button>
                <div class="hud">
                    <button class="tool" aria-label="Zoom to fit"><svg><use href="#zoomfit"/></svg></button>
                    <button class="tool" aria-label="Zoom to area"><svg><use href="#zoomarea"/></svg></button>
                    <button class="tool" aria-label="Previous view"><svg><use href="#prev"/></svg></button>
                    <button class="tool" aria-label="Section view"><svg><use href="#section"/></svg></button>
                    <button class="tool" aria-label="Annotation views"><svg><use href="#annot"/></svg></button>
                    <button class="tool" aria-label="View orientation"><svg><use href="#v-front"/></svg></button><button class="drop" aria-label="Orientation menu"></button>
                    <button class="tool" aria-label="Display style"><svg><use href="#style"/></svg></button><button class="drop" aria-label="Style menu"></button>
                    <button class="tool" aria-label="Hide/show"><svg><use href="#eye"/></svg></button><button class="drop" aria-label="Hide/show menu"></button>
                    <button class="tool" aria-label="Edit appearance"><svg><use href="#ballpen"/></svg></button>
                    <button class="tool" aria-label="Apply scene"><svg><use href="#scene"/></svg></button><button class="drop" aria-label="Scene menu"></button>
                    <button class="tool" aria-label="View settings"><svg><use href="#monitor"/></svg></button><button class="drop" aria-label="Settings menu"></button>
                </div>
                <div class="doc-buttons">
                    <button aria-label="Expand left"><svg><use href="#paneleft"/></svg></button>
                    <button aria-label="Expand right"><svg><use href="#paneright"/></svg></button>
                    <button aria-label="Minimize document"><svg><use href="#minus"/></svg></button>
                    <button aria-label="Restore document"><svg><use href="#restore"/></svg></button>
                    <button aria-label="Close document"><svg><use href="#close"/></svg></button>
                </div>
                <canvas class="model" id="model" width="400" height="720"></canvas>
                <nav class="taskpane">
                    <button class="active" aria-label="Community"><svg><use href="#globe"/></svg></button>
                    <button aria-label="Resources"><svg><use href="#home"/></svg></button>
                    <button aria-label="Design library"><svg><use href="#books"/></svg></button>
                    <button aria-label="File explorer"><svg><use href="#dir"/></svg></button>
                    <button aria-label="View palette"><svg><use href="#palette"/></svg></button>
                    <button aria-label="Appearances"><svg><use href="#ball"/></svg></button>
                    <button aria-label="Custom properties"><svg><use href="#props"/></svg></button>
                </nav>
                <div class="orientation">
                    <svg class="triad" viewBox="0 0 64 70">
                        <path stroke="#1c6b28" stroke-width="4" d="M22 50V22"/><path fill="#2c8a38" d="M22 15l5 11H17z"/><ellipse cx="22" cy="25" rx="5" ry="2" fill="#123"/>
                        <path stroke="#c62424" stroke-width="4" d="M22 49l24 3"/><path fill="#d83030" d="M55 53l-11-5v10z"/><ellipse cx="46" cy="53" rx="2.500" ry="5" fill="#300"/>
                        <path stroke="#111" stroke-width="5" d="M22 49l-7 7"/><circle cx="13" cy="58" r="5.500" fill="#111"/>
                        <text x="18" y="12" fill="#2c7a34">Y</text><text x="54" y="59" fill="#b03030">X</text><text x="3" y="68" fill="#2a2a90">Z</text>
                    </svg>
                    <p>*Dimetric</p>
                </div>
            </section>
        </main>

        <footer class="sheets">
            <div class="sheet-nav">
                <button aria-label="First"><svg viewBox="0 0 12 12"><path d="M10 1v10L4 6zM2 1h1v10H2z"/></svg></button>
                <button aria-label="Previous"><svg viewBox="0 0 12 12"><path d="M9 1v10L3 6z"/></svg></button>
                <button aria-label="Next"><svg viewBox="0 0 12 12"><path d="M3 1v10l6-5z"/></svg></button>
                <button aria-label="Last"><svg viewBox="0 0 12 12"><path d="M2 1v10l6-5zM9 1h1v10H9z"/></svg></button>
            </div>
            <button class="sheet active">Model</button>
            <button class="sheet">3D Views</button>
            <button class="sheet last">Motion Study 1</button>
        </footer>
        <div class="status"><svg viewBox="0 0 230 3" aria-hidden="true"><path fill="#222" d="M3 0l2 3H1zM11 0l2 3H9zM214 1l8-1-2 3z"/></svg></div>
    </div>
    <script src="vase.js"></script>
</body>
</html>
```

FILE: styles.css
```css
* {
    box-sizing: border-box;
}
body {
    margin: 0;
    padding: 32px 0;
    background: #fff;
    color: #222;
    font: 13px/16px "Open Sans", "Noto Sans", sans-serif;
}
button {
    display: flex;
    align-items: center;
    justify-content: center;
    padding: 0;
    border: 0;
    background: none;
    color: inherit;
    font: inherit;
}
input {
    min-width: 0;
    padding: 0;
    border: 0;
    outline: 0;
    background: none;
    font: inherit;
}
svg {
    display: block;
    flex: none;
    width: 22px;
    height: 22px;
}
.sprite {
    position: absolute;
    width: 0;
    height: 0;
}
.app {
    display: flex;
    flex-direction: column;
    min-height: calc(100vh - 64px);
    border-top: 1px solid #b8b8b8;
    background: #f6f6f6;
}
.off {
    color: #bbb;
}
.drop {
    width: 20px;
    height: 20px;
}
.drop::before {
    content: "";
    border: 3px solid transparent;
    border-top: 4px solid #222;
    border-bottom-width: 0;
}
.drop:disabled::before {
    border-top-color: #999;
}
.dot {
    width: 7px;
    height: 7px;
    border: 1px solid #888;
    border-radius: 50%;
    background: #ccc;
}

/* title bar */
.titlebar {
    display: flex;
    align-items: center;
    height: 42px;
    padding-right: 4px;
    border-bottom: 1px solid #c0c0c0;
}
.logo {
    display: flex;
    align-items: center;
    width: 162px;
    padding-left: 6px;
    color: #c8372d;
    font: italic 16px/20px Lato, sans-serif;
}
.logo-mark {
    width: 24px;
    height: 26px;
    margin: 0 6px 4px 0;
}
.logo-bold {
    font-weight: 900;
}
.logo-thin {
    font-weight: 400;
}
.menu {
    display: flex;
}
.menu button {
    padding: 0 10px;
}
.pin svg {
    width: 18px;
    height: 18px;
}
.pin {
    width: 32px;
    margin-right: auto;
}
.quick {
    display: flex;
    flex: none;
    align-items: center;
    height: 41px;
    padding-left: 24px;
    border-left: 1px solid #c0c0c0;
}
.quick .tool {
    width: 28px;
    height: 35px;
}
.quick .home {
    width: 26px;
    margin-right: 9px;
}
.split {
    display: flex;
    align-items: center;
    margin-right: 3px;
}
.split.off {
    margin-right: 0;
}
.split .drop {
    width: 22px;
}
.quick .select-tool {
    display: flex;
    align-items: center;
    border: 1px solid #777;
}
.quick .select-tool .tool {
    width: 34px;
    background: #b0b0b0;
}
.select-tool .drop {
    width: 15px;
}
.quick .wide {
    width: 36px;
}
.small svg {
    width: 20px;
    height: 20px;
}
.gear-drop {
    width: 16px;
}
.doc-title {
    flex: 1;
    margin: 0;
    font-size: 13px;
    font-weight: 400;
    text-align: center;
}
.search {
    display: flex;
    align-items: center;
    width: 243px;
    height: 28px;
    margin-right: 4px;
    padding-left: 9px;
    border: 1px solid #bbb;
    background: #fff;
}
.search input {
    flex: 1;
    margin-left: 7px;
}
.search input::placeholder {
    color: #666;
}
.search-prompt {
    width: 16px;
    height: 18px;
}
.search-lens {
    width: 17px;
    height: 17px;
}
.search .drop {
    width: 16px;
    margin-left: 4px;
    opacity: .7;
}
.window-buttons {
    display: flex;
    color: #333;
}
.window-buttons button {
    width: 43px;
}
.slim svg {
    width: 20px;
}

/* view toolbar */
.toolbar {
    display: flex;
    height: 38px;
    border-bottom: 2px solid #ccc;
}
.bar {
    display: flex;
    align-items: center;
    border-right: 1px solid #999;
    padding: 0 7px 0 4px;
}
.bar .tool {
    width: 32px;
    height: 30px;
}
.bar .drop {
    width: 19px;
}
.grip {
    width: 4px;
    height: 32px;
    background: radial-gradient(circle, #888 1px, transparent 2px) 0 0 / 4px 5px;
}
.bar .lone {
    margin-left: 8px;
}
.sep {
    width: 1px;
    height: 26px;
    margin: 0 5px;
    background: #888;
}
.views {
    display: grid;
    grid-template-columns: repeat(9, 1fr);
    width: 291px;
}
.bar .pressed {
    border: 1px solid #777;
    background: #b4b4b4;
}

/* ribbon */
.ribbon {
    display: flex;
    height: 99px;
    border-bottom: 2px solid #999;
}
.group {
    display: flex;
    height: 94px;
    border-right: 1px solid #c4c4c4;
}
.group.last {
    border: 0;
}
.group.pad {
    padding-right: 7px;
}
.command {
    display: flex;
    flex-direction: column;
    align-items: center;
}
.command button:first-child {
    flex-direction: column;
    margin-top: 9px;
    white-space: nowrap;
}
.command button:first-child svg {
    margin-bottom: 1px;
}
.command .drop {
    height: 4px;
    margin: auto 0 10px;
}
.w-52 { width: 52px; }
.w-54 { width: 54px; }
.w-59 { width: 59px; }
.w-66 { width: 66px; }
.w-71 { width: 71px; }
.w-102 { width: 102px; }
.entities {
    display: grid;
    grid-template-columns: 34px 14px 34px 14px 34px 14px 34px;
    grid-template-rows: repeat(3, 31px);
    padding-top: 1px;
}
.entities .drop {
    width: 14px;
    height: auto;
}
.command-list {
    display: grid;
    grid-template-rows: repeat(3, 31px);
    width: 209px;
    padding-top: 1px;
}
.command-list div {
    display: flex;
    align-items: center;
    justify-content: space-between;
}
.command-list svg {
    margin: 0 9px 0 1px;
}
.command-list .drop {
    width: 24px;
}
.collapse {
    align-self: flex-end;
    margin: 0 8px 8px auto;
}
.collapse svg {
    width: 16px;
    height: 16px;
}

/* document tabs */
.tabs {
    display: flex;
    height: 27px;
    background: #fff;
}
.tabs button {
    padding: 0 11px;
    border: 1px solid #888;
    border-width: 0 1px 1px 0;
    background: #d4d4d4;
    white-space: nowrap;
}
.tabs .active {
    padding: 0 12px;
    border-bottom-color: #f6f6f6;
    background: #f6f6f6;
    font-weight: 600;
}
.tabs .tab-first {
    padding: 0 9px;
}
.tabs .tab-wide {
    padding: 0 19px;
}

/* workspace */
.workspace {
    display: flex;
    flex: 1;
}
.side {
    width: 40px;
    border-right: 2px solid #ccc;
    margin-bottom: 6px;
}
.grip-h {
    display: block;
    height: 4px;
    margin: 2px 2px 9px 4px;
    background: radial-gradient(circle, #888 1px, transparent 2px) 0 0 / 5px 4px;
}
.side-group {
    padding-bottom: 2px;
    border-bottom: 1px solid #999;
    margin-left: 6px;
    margin-right: 2px;
    margin-bottom: 8px;
}
.side-group.end {
    margin-left: 0;
    padding-left: 6px;
    padding-bottom: 7px;
}
.side-group button {
    width: 26px;
    height: 31px;
}
.panel {
    display: flex;
    flex-direction: column;
    width: 312px;
    padding-right: 3px;
}
.panel-grip {
    display: flex;
    align-items: center;
    justify-content: center;
    height: 24px;
    margin-bottom: 5px;
    border-top: 1px solid #9ab;
    border-bottom: 1px solid #aaa;
}
.panel-tabs {
    display: flex;
    height: 31px;
    border-bottom: 1px solid #aaa;
}
.panel-tabs button {
    width: 48px;
    height: 30px;
    border: 1px solid #888;
    border-left-width: 0;
    background: #d4d4d4;
}
.panel-tabs .active {
    width: 49px;
    height: 31px;
    border-bottom: 0;
    background: #f6f6f6;
}
.panel-tabs .more {
    width: 26px;
    margin-left: auto;
    border: 0;
    background: none;
}
.panel-tabs .more svg {
    width: 16px;
    height: 16px;
}
.filter {
    display: flex;
    align-items: center;
    height: 31px;
    margin: 0 4px;
    padding-left: 3px;
    border: 1px solid #b4b4b4;
}
.filter input {
    flex: 1;
}
.tree-root {
    display: flex;
    align-items: center;
    height: 27px;
    padding-left: 4px;
    white-space: nowrap;
}
.tree-root svg {
    margin-right: 5px;
}
.tree {
    display: grid;
    grid-template-rows: repeat(18, 1fr);
    height: 478px;
    margin: 0;
    padding: 0;
    border-bottom: 3px solid #4a86ad;
    font-size: 14px;
    list-style: none;
}
.tree li {
    display: flex;
    align-items: center;
    padding-left: 31px;
}
.tree svg {
    margin-right: 5px;
}
.tree .has-children {
    padding-left: 10px;
}
.has-children::before {
    content: "";
    width: 21px;
    height: 8px;
    background: #666;
    clip-path: polygon(0 0, 5px 4px, 0 8px);
}
.scrollbar {
    display: flex;
    height: 18px;
    margin: auto 0 6px;
    background: #f0f0f0;
}
.scrollbar button {
    width: 20px;
}
.scrollbar svg {
    width: 12px;
    height: 12px;
}
.track {
    display: flex;
    flex: 1;
}
.thumb {
    width: 88%;
    background: #cdcdcd;
}

/* graphics area */
.viewport {
    position: relative;
    flex: 1;
    border-left: 1px solid #888;
    background: #fff;
}
.splitter {
    position: absolute;
    top: 355px;
    left: -1px;
    width: 10px;
    height: 47px;
    border: 1px solid #888;
    border-left: 0;
    background: #f6f6f6;
}
.hud {
    position: absolute;
    top: -20px;
    right: 0;
    left: 0;
    display: flex;
    justify-content: center;
    padding-right: 6px;
}
.hud .tool {
    width: 31px;
    opacity: .75;
}
.hud .drop {
    width: 17px;
    opacity: .6;
}
.doc-buttons {
    position: absolute;
    top: -20px;
    right: 8px;
    display: flex;
    color: #999;
}
.doc-buttons button {
    width: 31px;
}
.doc-buttons svg {
    width: 20px;
}
.model {
    position: absolute;
    top: 41px;
    left: calc(50% - 217px);
}
.taskpane {
    position: absolute;
    top: 34px;
    right: 0;
    display: grid;
    grid-template-rows: repeat(7, 1fr);
    width: 31px;
    height: 202px;
    border: 1px solid #888;
    border-right-color: #bbb;
    background: #d4d4d4;
}
.taskpane button + button {
    border-top: 1px solid #888;
}
.taskpane .active {
    background: #fff;
}
.orientation {
    position: absolute;
    bottom: 3px;
    left: 14px;
    color: #111;
    font: 900 16px/18px Lato, sans-serif;
}
.orientation p {
    margin: 0;
}
.triad {
    width: 64px;
    height: 70px;
    margin: 0 0 28px 13px;
    font: 12px "Liberation Sans", sans-serif;
}

/* sheet tabs */
.sheets {
    display: flex;
    height: 19px;
    border: 1px solid #888;
    border-left: 0;
    padding-left: 40px;
    font-size: 14px;
    line-height: 14px;
}
.sheet-nav {
    display: grid;
    grid-template-columns: repeat(4, 1fr);
    width: 79px;
    background: #a4a4a4;
}
.sheet-nav button {
    border: 1px solid #888;
}
.sheet-nav svg {
    width: 12px;
    height: 12px;
    fill: #858585;
}
.sheet {
    padding: 0 11px 2px;
    border-right: 1px solid #888;
    background: #d4d4d4;
}
.sheet.active {
    padding-left: 13px;
    background: #f6f6f6;
    font-weight: 700;
}
.sheet.last {
    padding-right: 20px;
}
.status {
    height: 5px;
    padding-top: 2px;
}
.status svg {
    width: 230px;
    height: 3px;
    margin-left: auto;
}
```

FILE: vase.js
```js
// model units: 3 per pixel
const ctx = document.getElementById("model").getContext("2d");
ctx.setTransform(1 / 3, 0, 0, 1 / 3, 0, -10);

const leftSide = [[232, 215], [262, 255], [300, 305], [345, 365], [375, 430], [388, 490], [390, 600], [383, 670], [350, 770], [300, 880], [250, 980], [202, 1050], [155, 1150], [125, 1240], [108, 1315], [70, 1390], [45, 1480], [38, 1550], [45, 1630], [67, 1700], [72, 1770], [95, 1840], [140, 1915], [225, 2010]];
const bottomSide = [[285, 2080], [325, 2093], [380, 2100], [430, 2132], [485, 2140], [545, 2135], [580, 2147], [640, 2155], [690, 2145], [735, 2128], [810, 2130], [850, 2118]];
const rightSide = [[1042, 215], [1005, 255], [960, 300], [910, 360], [870, 440], [853, 520], [852, 620], [870, 700], [905, 820], [950, 940], [1002, 1050], [1050, 1140], [1100, 1250], [1140, 1340], [1165, 1450], [1177, 1560], [1175, 1650], [1155, 1760], [1120, 1850], [1070, 1930], [1000, 2010], [940, 2060], [895, 2078]];

const grooves = [
    [[350, 250], [410, 420], [433, 520], [420, 620], [400, 720], [360, 820], [300, 930], [245, 1050], [180, 1150], [130, 1250], [105, 1310], [60, 1400], [0, 1500]],
    [[560, 280], [545, 340], [530, 440], [525, 520], [510, 620], [485, 720], [440, 840], [390, 960], [352, 1050], [290, 1180], [210, 1310], [145, 1440], [100, 1550], [75, 1640], [60, 1720], [20, 1820]],
    [[770, 280], [715, 380], [690, 440], [640, 580], [620, 680], [590, 820], [545, 960], [520, 1050], [470, 1190], [380, 1360], [310, 1530], [240, 1670], [200, 1790], [195, 1900], [225, 2010]],
    [[930, 270], [830, 400], [780, 500], [755, 580], [730, 720], [720, 860], [705, 960], [692, 1050], [665, 1200], [590, 1410], [510, 1610], [430, 1790], [385, 1910], [365, 2050], [380, 2120]],
    [[1020, 255], [900, 370], [850, 480], [830, 580], [822, 680], [835, 840], [845, 960], [848, 1050], [850, 1250], [825, 1450], [765, 1650], [680, 1850], [600, 1990], [560, 2090], [545, 2140]],
    [[1060, 250], [880, 430], [855, 530], [857, 600], [865, 700], [890, 830], [930, 960], [955, 1050], [985, 1180], [1000, 1350], [995, 1530], [960, 1700], [910, 1840], [830, 1970], [740, 2120]],
    [[1080, 250], [900, 430], [862, 530], [862, 600], [885, 700], [925, 830], [980, 980], [1020, 1080], [1062, 1180], [1095, 1260], [1120, 1370], [1132, 1500], [1125, 1630], [1095, 1760], [1030, 1900], [940, 2030], [895, 2075], [860, 2120]]
];

// brightness of the rib crests, from the left edge to the right edge
const light = [
    [280, .34, .24, .16, .18, .36],
    [400, .3, .28, .17, .22, .4],
    [500, .3, .38, .3, .42, .5],
    [600, .34, .48, .52, .6, .58],
    [720, .36, .58, .76, .82, .68],
    [900, .36, .66, .9, .95, .76],
    [1100, .36, .7, .95, 1, .84],
    [1350, .34, .64, .9, 1, .9],
    [1550, .28, .54, .82, .98, .85],
    [1750, .22, .42, .68, .88, .76],
    [1900, .18, .32, .5, .68, .58],
    [2050, .16, .22, .3, .46, .36],
    [2160, .12, .16, .2, .3, .24]
];
const ramp = [[0, 22, 48], [0, 52, 104], [3, 84, 168], [9, 110, 220], [19, 138, 255], [43, 176, 255]];

function mix(a, b, t) {
    return a + (b - a) * t;
}

function clamp(v) {
    return Math.min(Math.max(v, 0), 1);
}

function xAt(points, y) {
    const last = points.length - 1;
    if (y <= points[0][1]) return points[0][0];
    if (y >= points[last][1]) return points[last][0];
    let i = 0;
    while (points[i + 1][1] < y) i++;
    const slope = (k) => {
        const a = points[Math.max(k - 1, 0)];
        const b = points[Math.min(k + 1, last)];
        return (b[0] - a[0]) / (b[1] - a[1]);
    };
    const h = points[i + 1][1] - points[i][1];
    const t = (y - points[i][1]) / h;
    const t2 = t * t;
    const t3 = t2 * t;
    return (2 * t3 - 3 * t2 + 1) * points[i][0] + (t3 - 2 * t2 + t) * h * slope(i)
        + (3 * t2 - 2 * t3) * points[i + 1][0] + (t3 - t2) * h * slope(i + 1);
}

function lightAt(u, y) {
    let i = 0;
    while (i < light.length - 2 && light[i + 1][0] < y) i++;
    const v = clamp((y - light[i][0]) / (light[i + 1][0] - light[i][0]));
    const c = clamp(u) * 4;
    const k = Math.min(Math.floor(c), 3);
    const at = (row) => mix(row[k + 1], row[k + 2], c - k);
    return mix(at(light[i]), at(light[i + 1]), v);
}

function color(b) {
    const c = clamp(b) * 5;
    const k = Math.min(Math.floor(c), 4);
    return "rgb(" + ramp[k].map((v, j) => Math.round(mix(v, ramp[k + 1][j], c - k))).join(",") + ")";
}

function trace(points, close) {
    ctx.beginPath();
    ctx.moveTo(points[0][0], points[0][1]);
    for (let i = 1; i < points.length - 1; i++) {
        const [x, y] = points[i];
        const [nx, ny] = points[i + 1];
        ctx.quadraticCurveTo(x, y, (x + nx) / 2, (y + ny) / 2);
    }
    const end = points[points.length - 1];
    ctx.lineTo(end[0], end[1]);
    if (close) ctx.closePath();
}

function fillRow(y, stops) {
    const g = ctx.createLinearGradient(-300, 0, 1500, 0);
    stops.forEach(([x, c]) => g.addColorStop(clamp((x + 300) / 1800), c));
    ctx.fillStyle = g;
    ctx.fillRect(-20, y, 1260, 3);
}

// body
const outline = leftSide.concat(bottomSide, rightSide.slice().reverse());
ctx.save();
trace(outline, true);
ctx.clip();
for (let y = 201; y < 2170; y += 3) {
    const xl = xAt(leftSide, y);
    const xr = xAt(rightSide, y);
    const xs = grooves.map((g) => xAt(g, y));
    xs.unshift(Math.min(xs[0], xl + 40) - 120);
    xs.push(xs[7] + 130);
    const depth = Math.max(clamp((y - 350) / 700), .15);
    const low = clamp((y - 1050) / 450);
    // a thin lit edge, then shade on both flanks of the rib
    const profile = [
        [0, 0], [.02, .05 * low], [.05, .3 * low], [.16, .18 * low], [.3, .05 * low], [.45, 0],
        [.62, .04 * depth], [.76, .14 * depth], [.88, .34 * depth], [.96, .54 * depth], [1, .64 * depth]
    ];
    const stops = [];
    for (let i = 0; i < xs.length - 1; i++) {
        profile.forEach(([t, dark]) => {
            const x = mix(xs[i], xs[i + 1], t);
            stops.push([x, color(lightAt((x - xl) / (xr - xl), y) * (1 - dark))]);
        });
    }
    fillRow(y, stops);
}
ctx.restore();
ctx.lineCap = "round";
trace(outline);
ctx.strokeStyle = "#02305f";
ctx.lineWidth = 3;
ctx.stroke();

// mouth
const backRim = [[203, 185], [206, 168], [240, 158], [240, 158], [226, 140], [262, 122], [335, 118], [335, 118], [350, 96], [410, 86], [480, 92], [520, 80], [590, 71], [650, 79], [670, 88], [740, 79], [815, 86], [860, 107], [860, 107], [920, 107], [975, 122], [992, 150], [992, 150], [1045, 158], [1060, 185], [1034, 205]];
const frontLip = [[1032, 205], [1026, 226], [985, 240], [928, 238], [928, 238], [915, 262], [870, 277], [810, 280], [765, 268], [765, 268], [740, 284], [665, 291], [595, 285], [570, 268], [570, 268], [525, 282], [450, 281], [400, 270], [385, 248], [385, 248], [310, 246], [268, 230], [258, 206], [258, 206], [226, 206], [207, 188]];
const flutes = [
    [200, 250, "#0b62bf"], [245, 300, "#1a86ee"], [300, 380, "#2aa6ff"], [350, 440, "#1478e0"], [385, 470, "#1a8cf5"], [450, 500, "#1b84f2"], [478, 535, "#0f5fb6"], [496, 552, "#1f93fb"],
    [555, 600, "#2aa8ff"], [610, 650, "#1b84f2"], [640, 682, "#02386f"], [652, 695, "#0f70d6"], [700, 730, "#2aa8ff"], [760, 765, "#2ba8ff"], [800, 790, "#1478e0"], [826, 806, "#06386f"], [845, 822, "#0d62c0"],
    [890, 850, "#1a86f2"], [925, 880, "#0e62bd"], [950, 905, "#06478c"], [985, 930, "#0f70d4"], [1020, 970, "#0a5cb5"], [1060, 1010, "#0862c4"]
];
ctx.save();
trace(backRim.concat(frontLip), true);
ctx.clip();
for (let y = 66; y < 300; y += 3) {
    const s = (y - 90) / 180;
    fillRow(y, flutes.map(([top, base, c]) => [mix(top, base, s), c]));
}
trace(backRim);
ctx.strokeStyle = "#0f6cd0";
ctx.lineWidth = 14;
ctx.stroke();
ctx.restore();

ctx.lineJoin = "round";
[["#043c78", 24], ["#0a5cb8", 20], ["#1680ee", 8]].forEach(([c, w]) => {
    trace(frontLip);
    ctx.strokeStyle = c;
    ctx.lineWidth = w;
    ctx.stroke();
});
trace(backRim);
ctx.strokeStyle = "#02305f";
ctx.lineWidth = 2;
ctx.stroke();
```
